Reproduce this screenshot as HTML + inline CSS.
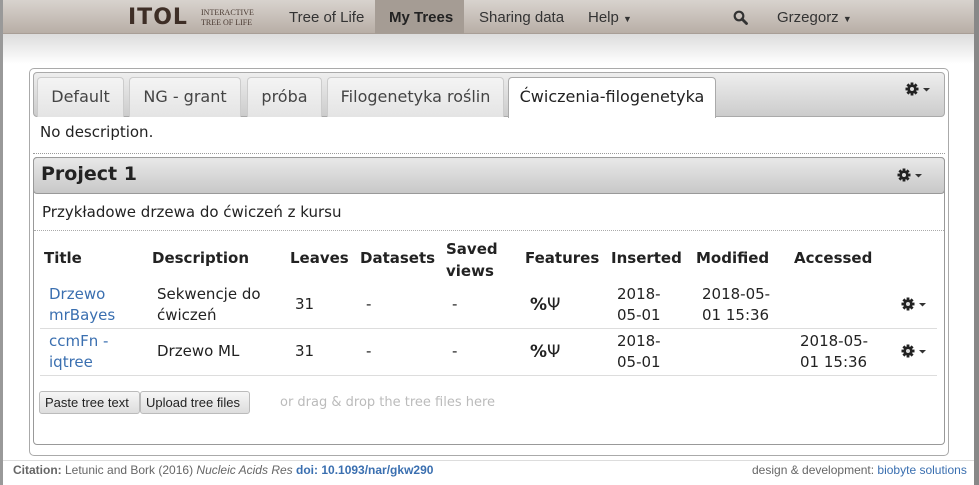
<!DOCTYPE html>
<html><head><meta charset="utf-8"><style>
*{margin:0;padding:0;box-sizing:border-box}
body{width:979px;height:485px;position:relative;overflow:hidden;background:#fff;font-family:"DejaVu Sans",Verdana,sans-serif;color:#222}
.a{position:absolute;white-space:nowrap}
.frame{left:0;top:0;width:979px;height:485px;border-left:3px solid #999;border-right:5px solid #888;}
.nav{left:3px;top:0;width:971px;height:34px;background:linear-gradient(#d8d3ce,#b8aea6);border-bottom:1px solid #a89e96;font-family:"Liberation Sans",Arial,sans-serif;font-size:15px;color:#333}
.nav span{position:absolute;top:9px}
.bg{left:3px;top:34px;width:971px;height:30px;background:linear-gradient(#dcdcdc,#fff)}
.outer{left:29px;top:68px;width:920px;height:388px;border:1px solid #aaa;border-radius:5px;background:#fff}
.tabbar{left:33px;top:72px;width:912px;height:45px;border:1px solid #aaa;border-radius:4px;background:linear-gradient(#eee,#ccc)}
.tab{position:absolute;top:77px;height:40px;border:1px solid #ccc;border-bottom:none;border-radius:4px 4px 0 0;background:linear-gradient(#f4f4f4,#e4e4e4);font-size:16px;color:#444;text-align:center;line-height:38px}
.proj{left:33px;top:157px;width:912px;height:288px;border:1px solid #999;border-radius:4px}
.ph{left:33px;top:157px;width:912px;height:37px;border:1px solid #999;border-radius:4px;background:linear-gradient(#e8e8e8,#c8c8c8)}
.th{font-weight:bold;font-size:15px;color:#222}
.td{font-size:15px;color:#222;line-height:21px}
.lnk{color:#3a6fb0}
.btn{position:absolute;top:391px;height:23px;border:1px solid #bbb;border-radius:3px;background:linear-gradient(#f6f6f6,#ddd);font-family:"Liberation Sans",Arial,sans-serif;font-size:13px;line-height:21px;padding:0 5px;color:#222}
.gear{width:28px;height:14px}
</style></head><body>
<svg width="0" height="0" style="position:absolute"><defs>
<g id="g"><g fill="#222"><circle cx="7" cy="7" r="4.6"/><rect x="5.6" y="0.5" width="2.8" height="13"/><rect x="0.5" y="5.6" width="13" height="2.8"/><rect x="5.6" y="0.5" width="2.8" height="13" transform="rotate(45 7 7)"/><rect x="5.6" y="0.5" width="2.8" height="13" transform="rotate(-45 7 7)"/></g><circle cx="7" cy="7" r="2" fill="#ddd"/><path d="M18 6h7l-3.5 3.5z" fill="#333"/></g>
</defs></svg>
<div class="a frame"></div>
<div class="a nav">
<span style="left:125px;top:5px;font-family:'DejaVu Sans',sans-serif;font-weight:bold;font-size:22px;color:#3e2e26;letter-spacing:1px">ITOL</span>
<span style="left:198px;top:8px;font-family:'Liberation Serif',serif;font-size:8px;line-height:10px;color:#4a3a32">INTERACTIVE<br>TREE OF LIFE</span>
<span style="left:286px">Tree of Life</span>
<div style="position:absolute;left:372px;top:0;width:89px;height:34px;background:#a59c94"></div>
<span style="left:386px;font-weight:bold;color:#222">My Trees</span>
<span style="left:476px">Sharing data</span>
<span style="left:585px">Help <small style="font-size:9px">▼</small></span>
<svg style="position:absolute;left:730px;top:10px" width="15" height="15"><circle cx="6" cy="6" r="4.3" fill="none" stroke="#333" stroke-width="2.2"/><path d="M9 9l4.5 4.5" stroke="#333" stroke-width="2.8" stroke-linecap="round"/></svg>
<span style="left:774px">Grzegorz <small style="font-size:9px">▼</small></span>
</div>
<div class="a bg"></div>
<div class="a outer"></div>
<div class="a tabbar"></div>
<div class="tab" style="left:37px;width:87px">Default</div>
<div class="tab" style="left:129px;width:112px">NG - grant</div>
<div class="tab" style="left:247px;width:75px">próba</div>
<div class="tab" style="left:327px;width:177px">Filogenetyka roślin</div>
<div class="tab" style="left:508px;width:208px;background:#fff;border-color:#aaa;height:41px;color:#222">Ćwiczenia-filogenetyka</div>
<svg class="a gear" style="left:905px;top:82px"><use href="#g"/></svg>
<div class="a" style="left:40px;top:123px;font-size:15px">No description.</div>
<div class="a" style="left:33px;top:153px;width:912px;border-top:1px dotted #999"></div>
<div class="a proj"></div>
<div class="a ph"></div>
<div class="a" style="left:41px;top:163px;font-size:19px;font-weight:bold;color:#222">Project 1</div>
<svg class="a gear" style="left:897px;top:168px"><use href="#g"/></svg>
<div class="a" style="left:42px;top:203px;font-size:15px">Przykładowe drzewa do ćwiczeń z kursu</div>
<div class="a" style="left:34px;top:230px;width:910px;border-top:1px dotted #aaa"></div>
<div class="a th" style="left:44px;top:249px">Title</div>
<div class="a th" style="left:152px;top:249px">Description</div>
<div class="a th" style="left:290px;top:249px">Leaves</div>
<div class="a th" style="left:360px;top:249px">Datasets</div>
<div class="a th" style="left:446px;top:238px;line-height:22px">Saved<br>views</div>
<div class="a th" style="left:525px;top:249px">Features</div>
<div class="a th" style="left:611px;top:249px">Inserted</div>
<div class="a th" style="left:696px;top:249px">Modified</div>
<div class="a th" style="left:794px;top:249px">Accessed</div>
<div class="a" style="left:40px;top:328px;width:897px;border-top:1px solid #ddd"></div>
<div class="a" style="left:40px;top:375px;width:897px;border-top:1px solid #ddd"></div>
<div class="a td lnk" style="left:49px;top:284px">Drzewo<br>mrBayes</div>
<div class="a td" style="left:157px;top:284px">Sekwencje do<br>ćwiczeń</div>
<div class="a td" style="left:295px;top:294px">31</div>
<div class="a td" style="left:366px;top:294px">-</div>
<div class="a td" style="left:452px;top:294px">-</div>
<div class="a td" style="left:530px;top:295px;font-weight:bold;font-size:17px">%<span style="font-weight:normal">Ψ</span></div>
<div class="a td" style="left:617px;top:284px">2018-<br>05-01</div>
<div class="a td" style="left:702px;top:284px">2018-05-<br>01 15:36</div>
<svg class="a gear" style="left:901px;top:297px"><use href="#g"/></svg>
<div class="a td lnk" style="left:49px;top:331px">ccmFn -<br>iqtree</div>
<div class="a td" style="left:157px;top:341px">Drzewo ML</div>
<div class="a td" style="left:295px;top:341px">31</div>
<div class="a td" style="left:366px;top:341px">-</div>
<div class="a td" style="left:452px;top:341px">-</div>
<div class="a td" style="left:530px;top:342px;font-weight:bold;font-size:17px">%<span style="font-weight:normal">Ψ</span></div>
<div class="a td" style="left:617px;top:331px">2018-<br>05-01</div>
<div class="a td" style="left:800px;top:331px">2018-05-<br>01 15:36</div>
<svg class="a gear" style="left:901px;top:344px"><use href="#g"/></svg>
<div class="btn" style="left:39px;width:101px">Paste tree text</div>
<div class="btn" style="left:140px;width:110px">Upload tree files</div>
<div class="a" style="left:280px;top:395px;font-size:13px;color:#bbb">or drag &amp; drop the tree files here</div>
<div class="a" style="left:3px;top:460px;width:971px;border-top:1px solid #ddd"></div>
<div class="a" style="left:13px;top:463px;font-family:'Liberation Sans',Arial,sans-serif;font-size:12px;color:#666"><b>Citation:</b> Letunic and Bork (2016) <i>Nucleic Acids Res</i> <b style="color:#3a6fb0">doi: 10.1093/nar/gkw290</b></div>
<div class="a" style="left:752px;top:463px;font-family:'Liberation Sans',Arial,sans-serif;font-size:12px;color:#666">design &amp; development: <span style="color:#3a6fb0">biobyte solutions</span></div>
</body></html>
